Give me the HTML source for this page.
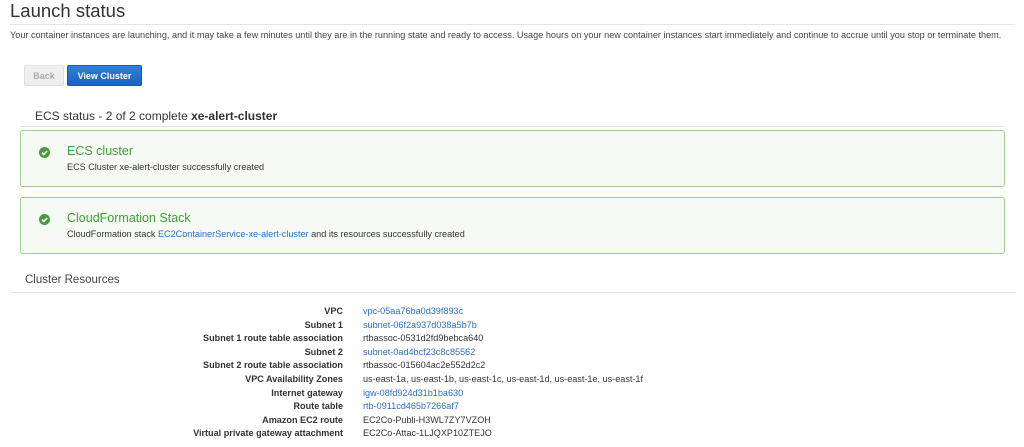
<!DOCTYPE html>
<html><head><meta charset="utf-8"><style>
*{margin:0;padding:0;box-sizing:border-box}
body{width:1024px;height:447px;background:#fff;font-family:"Liberation Sans",Arial,sans-serif;color:#444;position:relative;overflow:hidden}
.a{position:absolute;white-space:nowrap}
.line{position:absolute;height:1px;background:#e4e4e4}
.btn{position:absolute;height:21px;border-radius:2px;font-size:9px;font-weight:bold;text-align:center;line-height:21px}
.box{position:absolute;left:20px;width:985px;height:57px;background:#f5fbf4;border:1px solid #9fcf94;border-radius:3px}
.chk{position:absolute;left:18px;top:16px;width:11px;height:11px}
.bt{position:absolute;left:46px;top:13px;font-size:12.5px;color:#3f9e36;white-space:nowrap}
.bs{position:absolute;left:46px;top:31px;font-size:9.1px;color:#333;white-space:nowrap}
a{color:#2d6fc1;text-decoration:none}
.row{position:absolute;font-size:9.1px;height:13.6px;white-space:nowrap}
.l{right:681px;font-weight:bold;color:#333}
.v{left:363px;color:#333}
</style></head><body>
<div class="a" style="left:10px;top:0px;font-size:18.5px;color:#333">Launch status</div>
<div class="line" style="left:10px;top:24px;width:1005px"></div>
<div class="a" style="left:10px;top:30px;font-size:9.15px;color:#444">Your container instances are launching, and it may take a few minutes until they are in the running state and ready to access. Usage hours on your new container instances start immediately and continue to accrue until you stop or terminate them.</div>
<div class="btn" style="left:24px;top:65px;width:40px;background:#efefef;border:1px solid #e0e0e0;color:#aaa">Back</div>
<div class="btn" style="left:67px;top:65px;width:75px;background:linear-gradient(#2f7fd8,#1b63be);border:1px solid #1a5aa8;color:#fff">View Cluster</div>
<div class="a" style="left:35px;top:109px;font-size:12px;color:#333">ECS status - 2 of 2 complete <b>xe-alert-cluster</b></div>
<div class="line" style="left:20px;top:126px;width:985px"></div>
<div class="box" style="top:130px"><svg class="chk" viewBox="0 0 11 11"><circle cx="5.5" cy="5.5" r="5.5" fill="#4a9a3d"/><path d="M3 5.7l1.8 1.8 3.3-3.5" stroke="#fff" stroke-width="1.6" fill="none"/></svg><div class="bt">ECS cluster</div><div class="bs">ECS Cluster xe-alert-cluster successfully created</div></div>
<div class="box" style="top:197px"><svg class="chk" viewBox="0 0 11 11"><circle cx="5.5" cy="5.5" r="5.5" fill="#4a9a3d"/><path d="M3 5.7l1.8 1.8 3.3-3.5" stroke="#fff" stroke-width="1.6" fill="none"/></svg><div class="bt">CloudFormation Stack</div><div class="bs">CloudFormation stack <a>EC2ContainerService-xe-alert-cluster</a> and its resources successfully created</div></div>
<div class="a" style="left:25px;top:274px;font-size:11.5px;color:#444">Cluster Resources</div>
<div class="line" style="left:10px;top:292px;width:1005px"></div>
<div class="row l" style="top:306px">VPC</div><div class="row v" style="top:306px"><a>vpc-05aa76ba0d39f893c</a></div>
<div class="row l" style="top:319.6px">Subnet 1</div><div class="row v" style="top:319.6px"><a>subnet-06f2a937d038a5b7b</a></div>
<div class="row l" style="top:333.2px">Subnet 1 route table association</div><div class="row v" style="top:333.2px">rtbassoc-0531d2fd9bebca640</div>
<div class="row l" style="top:346.8px">Subnet 2</div><div class="row v" style="top:346.8px"><a>subnet-0ad4bcf23c8c85562</a></div>
<div class="row l" style="top:360.4px">Subnet 2 route table association</div><div class="row v" style="top:360.4px">rtbassoc-015604ac2e552d2c2</div>
<div class="row l" style="top:374px">VPC Availability Zones</div><div class="row v" style="top:374px">us-east-1a, us-east-1b, us-east-1c, us-east-1d, us-east-1e, us-east-1f</div>
<div class="row l" style="top:387.6px">Internet gateway</div><div class="row v" style="top:387.6px"><a>igw-08fd924d31b1ba630</a></div>
<div class="row l" style="top:401.2px">Route table</div><div class="row v" style="top:401.2px"><a>rtb-0911cd465b7266af7</a></div>
<div class="row l" style="top:414.8px">Amazon EC2 route</div><div class="row v" style="top:414.8px">EC2Co-Publi-H3WL7ZY7VZOH</div>
<div class="row l" style="top:428.4px">Virtual private gateway attachment</div><div class="row v" style="top:428.4px">EC2Co-Attac-1LJQXP10ZTEJO</div>
</body></html>
